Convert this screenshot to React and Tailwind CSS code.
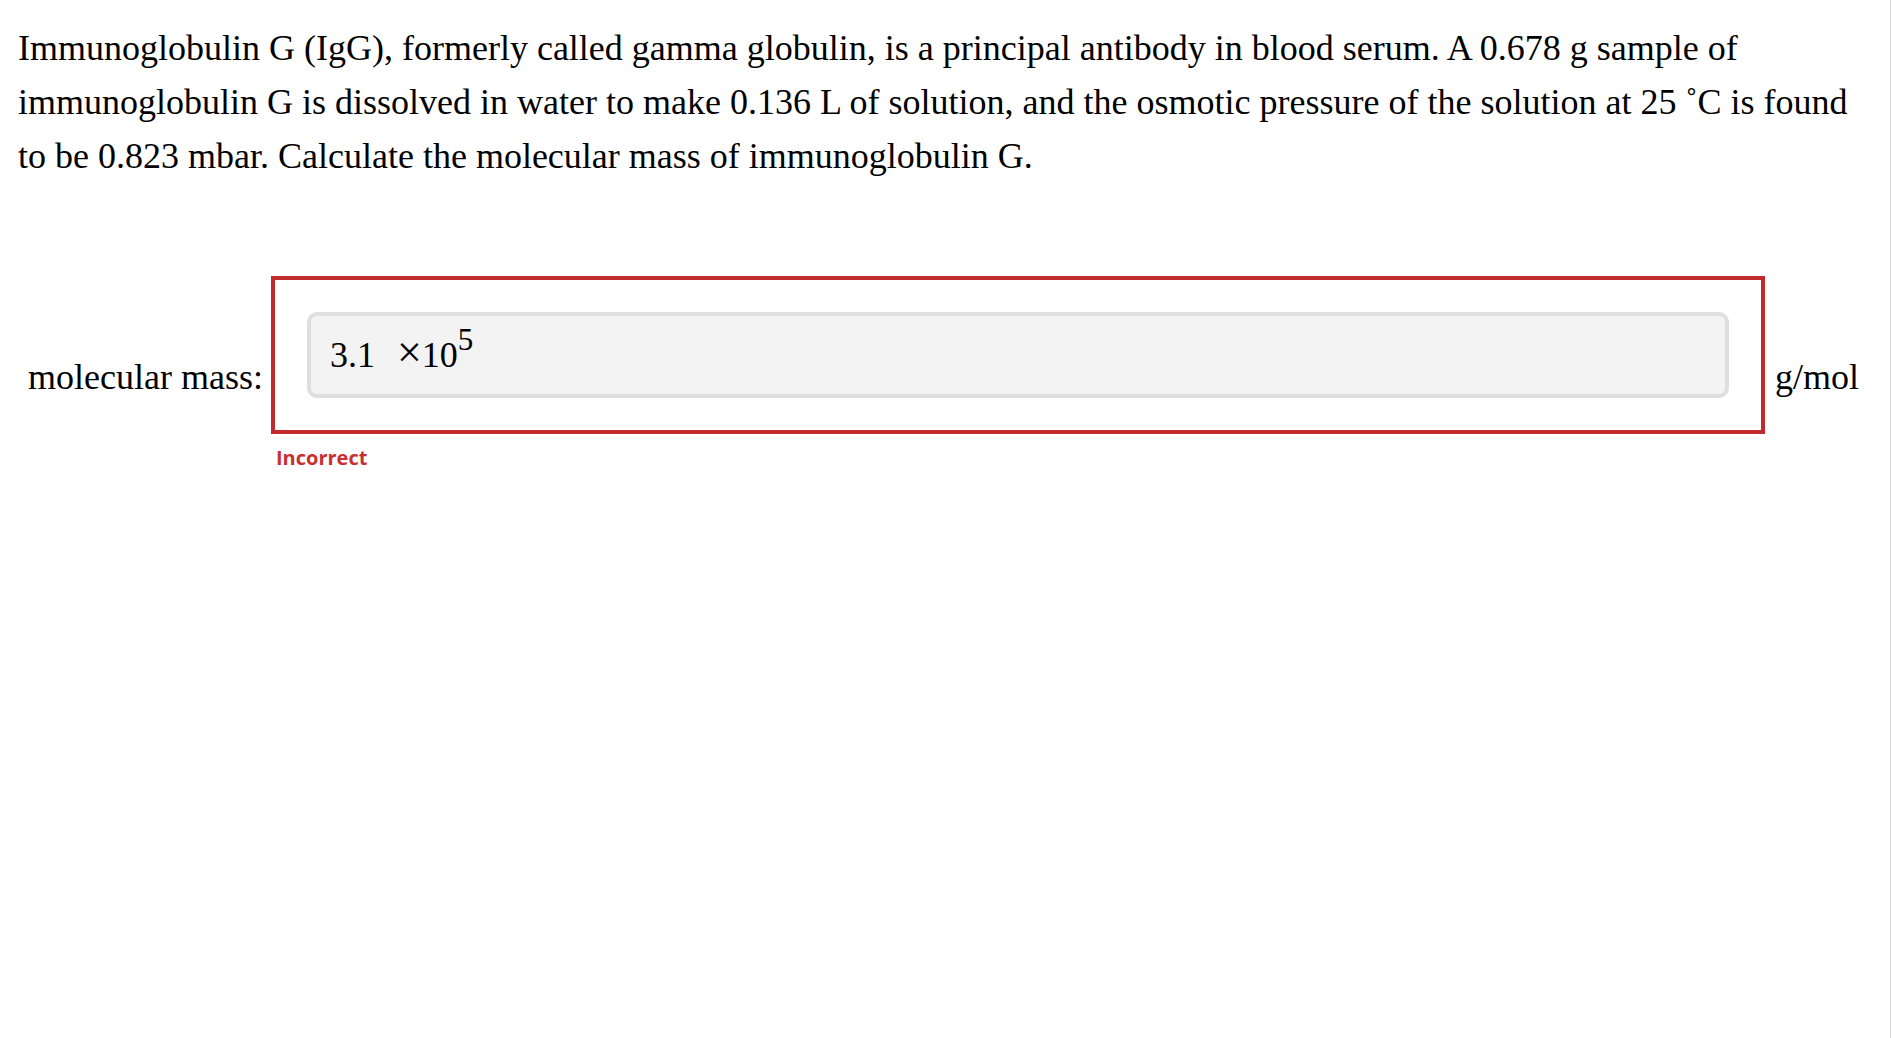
import React from 'react';

const serif = "font-['Liberation_Serif','Times_New_Roman',serif]";

const AnswerField = ({ value, power }) => (
  <div className="w-[1494px] h-[158px] border-4 border-[#c12b2e] p-[32px]">
    <div className="h-[86px] rounded-[10px] border-4 border-[#dfdfdf] bg-[#f3f3f3] flex items-center pl-[19px]">
      <span className="text-[36px] leading-[54px] text-black">{value}</span>
      <span className="ml-[22px] text-[36px] leading-[54px] text-black">
        <span className="text-[44px] leading-none">×</span>10
        <span className="relative top-[-17px] text-[31px] leading-none">{power}</span>
      </span>
    </div>
  </div>
);

export default function App() {
  return (
    <div className={`min-h-screen bg-white border-r border-[#d4d4d4] text-black ${serif}`}>
      <p className="pt-[21px] px-[18px] text-[36px] leading-[54px]">
        Immunoglobulin G (IgG), formerly called gamma globulin, is a principal antibody in blood serum. A 0.678 g sample of
        immunoglobulin G is dissolved in water to make 0.136 L of solution, and the osmotic pressure of the solution at 25 ˚C is found
        to be 0.823 mbar. Calculate the molecular mass of immunoglobulin G.
      </p>

      <div className="mt-[93px] flex items-start">
        <div className="w-[271px] pl-[28px] pt-[74px] text-[36px] leading-[54px] whitespace-nowrap">molecular mass:</div>
        <div>
          <AnswerField value="3.1" power="5" />
          <div className="mt-[10px] pl-[5px] font-['Open_Sans',sans-serif] font-bold text-[20px] leading-[28px] text-[#c8302f]">
            Incorrect
          </div>
        </div>
        <div className="pl-[10px] pt-[74px] text-[36px] leading-[54px] whitespace-nowrap">g/mol</div>
      </div>
    </div>
  );
}
